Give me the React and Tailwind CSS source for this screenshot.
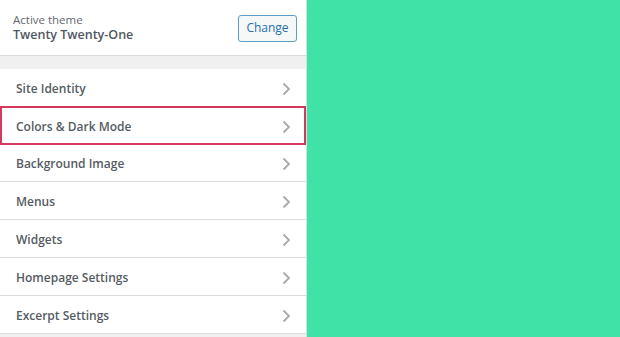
import React from 'react';

const items = [
  'Site Identity',
  'Colors & Dark Mode',
  'Background Image',
  'Menus',
  'Widgets',
  'Homepage Settings',
  'Excerpt Settings',
];

const Chevron = () => (
  <svg width="10" height="14" viewBox="0 0 10 14" fill="none" className="shrink-0">
    <path d="M2.5 1.5L8 7l-5.5 5.5" stroke="#a7aaad" strokeWidth="1.8" />
  </svg>
);

const App = () => {
  return (
    <div
      className="flex w-[620px] h-[337px] overflow-hidden bg-[#41e2a7]"
      style={{ fontFamily: '"Open Sans", "Noto Sans", sans-serif' }}
    >
      {/* Customizer panel */}
      <div className="w-[307px] h-full shrink-0 bg-[#f0f0f1] flex flex-col border-r border-[#dcdcde]">
        <div className="h-[56px] bg-white border-b border-[#dcdcde] flex items-center justify-between pl-[13px] pr-[9px]">
          <div className="leading-tight">
            <div className="text-[11.5px] text-[#646970]">Active theme</div>
            <div className="text-[12.5px] font-semibold text-[#50575e]">Twenty Twenty-One</div>
          </div>
          <button className="h-[27px] w-[59px] mt-[1px] rounded-[3px] border border-[#5c9dc9] bg-[#f6f7f7] text-[12px] text-[#2271b1]">
            Change
          </button>
        </div>
        <div className="h-[13px]" />
        <div className="flex flex-col">
          {items.map((label, i) => (
            <div
              key={label}
              className={`flex items-center justify-between pt-[3px] bg-white ${
                i === 1
                  ? 'border-2 border-[#d6395b] pl-[14px] pr-[13px] h-[39px] -my-px relative'
                  : 'h-[38px] pl-[16px] pr-[15px] border-b border-[#dcdcde]'
              }`}
            >
              <span className="text-[12px] font-semibold text-[#555c63]">{label}</span>
              <Chevron />
            </div>
          ))}
        </div>
      </div>
    </div>
  );
};

export default App;
